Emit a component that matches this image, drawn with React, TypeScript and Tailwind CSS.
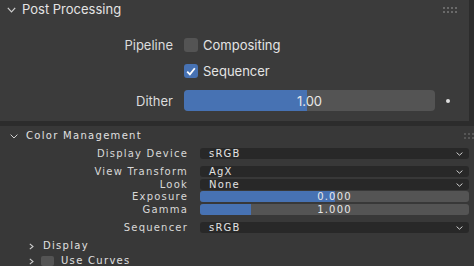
import React from "react";

const Chevron = ({ className = "" }: { className?: string }) => (
  <svg width="9" height="6" viewBox="0 0 9 6" className={className}>
    <polyline points="0.8,0.8 4.5,4.8 8.2,0.8" fill="none" stroke="#cfcfcf" strokeWidth="1.2" />
  </svg>
);

const Right = () => (
  <svg width="5" height="7" viewBox="0 0 5 7">
    <polyline points="0.8,0.8 4,3.5 0.8,6.2" fill="none" stroke="#cfcfcf" strokeWidth="1.1" />
  </svg>
);

const Grip = () => (
  <div className="grid grid-cols-4 gap-x-[2px] gap-y-[2px]">
    {Array.from({ length: 8 }).map((_, i) => (
      <div key={i} className="w-[2px] h-[2px] bg-[#6a6a6a]" />
    ))}
  </div>
);

const DropDown = ({ value }: { value: string }) => (
  <div className="w-[269px] h-[11px] bg-[#282828] rounded-[3px] flex items-center justify-between pl-[9px] pr-[6px]">
    <span className="text-[10px] leading-none tracking-[1.2px] text-[#e2e2e2]">{value}</span>
    <svg width="7" height="4" viewBox="0 0 7 4">
      <polyline points="0.6,0.6 3.5,3.2 6.4,0.6" fill="none" stroke="#d0d0d0" strokeWidth="1" />
    </svg>
  </div>
);

const SmallSlider = ({ value, pct }: { value: string; pct: number }) => (
  <div className="relative w-[269px] h-[11px] bg-[#545454] rounded-[3px] overflow-hidden">
    <div className="absolute left-0 top-0 bottom-0 bg-[#4772b3]" style={{ width: `${pct}%` }} />
    <div className="absolute inset-0 flex items-center justify-center text-[10px] leading-none tracking-[1.2px] text-[#e8e8e8]">
      {value}
    </div>
  </div>
);

const SmallRow = ({ label, children, mt }: { label: string; children: React.ReactNode; mt: string }) => (
  <div className={`flex items-center ${mt}`}>
    <div className="w-[188px] text-right text-[10px] leading-none tracking-[1.2px] text-[#d8d8d8]">{label}</div>
    <div className="ml-[12px]">{children}</div>
  </div>
);

export default function App() {
  return (
    <div
      className="w-[474px] h-[266px] bg-[#2c2c2c] overflow-hidden flex flex-col"
      style={{ fontFamily: "Inter, 'DejaVu Sans', sans-serif" }}
    >
      {/* Top panel */}
      <div className="w-[469px] h-[121px] bg-[#3b3b3b] flex flex-col shrink-0">
        <div className="h-[19px] flex items-center pl-[7px] pr-[12px]">
          <Chevron />
          <span className="ml-[6px] text-[13px] leading-none text-[#e4e4e4]">Post Processing</span>
          <div className="ml-auto">
            <Grip />
          </div>
        </div>
        <div className="flex items-center mt-[19px] h-[14px]">
          <div className="w-[173px] text-right text-[13px] leading-none text-[#dcdcdc]">Pipeline</div>
          <div className="ml-[11px] w-[14px] h-[14px] rounded-[3px] bg-[#545454]" />
          <span className="ml-[5px] text-[13px] leading-none text-[#e4e4e4]">Compositing</span>
        </div>
        <div className="flex items-center mt-[12px] h-[14px]">
          <div className="w-[173px]" />
          <div className="ml-[11px] w-[14px] h-[14px] rounded-[3px] bg-[#4772b3] flex items-center justify-center">
            <svg width="10" height="9" viewBox="0 0 10 9">
              <polyline points="1.2,4.6 3.9,7.3 8.8,1.3" fill="none" stroke="#ffffff" strokeWidth="1.8" />
            </svg>
          </div>
          <span className="ml-[5px] text-[13px] leading-none text-[#e4e4e4]">Sequencer</span>
        </div>
        <div className="flex items-center mt-[12px] h-[21px]">
          <div className="w-[173px] text-right text-[13px] leading-none text-[#dcdcdc] pt-[1px]">Dither</div>
          <div className="relative ml-[11px] w-[251px] h-[21px] bg-[#545454] rounded-[4px] overflow-hidden">
            <div className="absolute left-0 top-0 bottom-0 w-[123px] bg-[#4772b3]" />
            <div className="absolute inset-0 flex items-center justify-center text-[13px] leading-none text-[#e8e8e8] pt-[1px]">
              1.00
            </div>
          </div>
          <div className="ml-[11px] w-[4px] h-[4px] rounded-full bg-[#dedede]" />
        </div>
      </div>

      {/* Lower panel */}
      <div className="mt-[5px] flex-1 bg-[#383838] flex flex-col" style={{ fontFamily: "'DejaVu Sans', sans-serif" }}>
        <div className="h-[20px] flex items-center pl-[10px] shrink-0">
          <svg width="8" height="5" viewBox="0 0 8 5">
            <polyline points="0.6,0.6 4,4 7.4,0.6" fill="none" stroke="#cfcfcf" strokeWidth="1" />
          </svg>
          <span className="ml-[8px] text-[10px] leading-none tracking-[1.3px] text-[#e0e0e0]">Color Management</span>
          <div className="ml-auto mr-[-4px] opacity-60">
            <Grip />
          </div>
        </div>
        <SmallRow label="Display Device" mt="mt-[2px]">
          <DropDown value="sRGB" />
        </SmallRow>
        <SmallRow label="View Transform" mt="mt-[7px]">
          <DropDown value="AgX" />
        </SmallRow>
        <SmallRow label="Look" mt="mt-[2px]">
          <DropDown value="None" />
        </SmallRow>
        <SmallRow label="Exposure" mt="mt-[1px]">
          <SmallSlider value="0.000" pct={50} />
        </SmallRow>
        <SmallRow label="Gamma" mt="mt-[2px]">
          <SmallSlider value="1.000" pct={19} />
        </SmallRow>
        <SmallRow label="Sequencer" mt="mt-[7px]">
          <DropDown value="sRGB" />
        </SmallRow>
        <div className="h-[16px] mt-[5px] flex items-center pl-[29px]">
          <Right />
          <span className="ml-[9px] text-[10px] leading-none tracking-[1.3px] text-[#e0e0e0]">Display</span>
        </div>
        <div className="h-[14px] flex items-center pl-[29px]">
          <Right />
          <div className="ml-[7px] w-[13px] h-[10px] rounded-[2px] bg-[#545454]" />
          <span className="ml-[7px] text-[10px] leading-none tracking-[1.3px] text-[#e0e0e0]">Use Curves</span>
        </div>
      </div>
    </div>
  );
}
